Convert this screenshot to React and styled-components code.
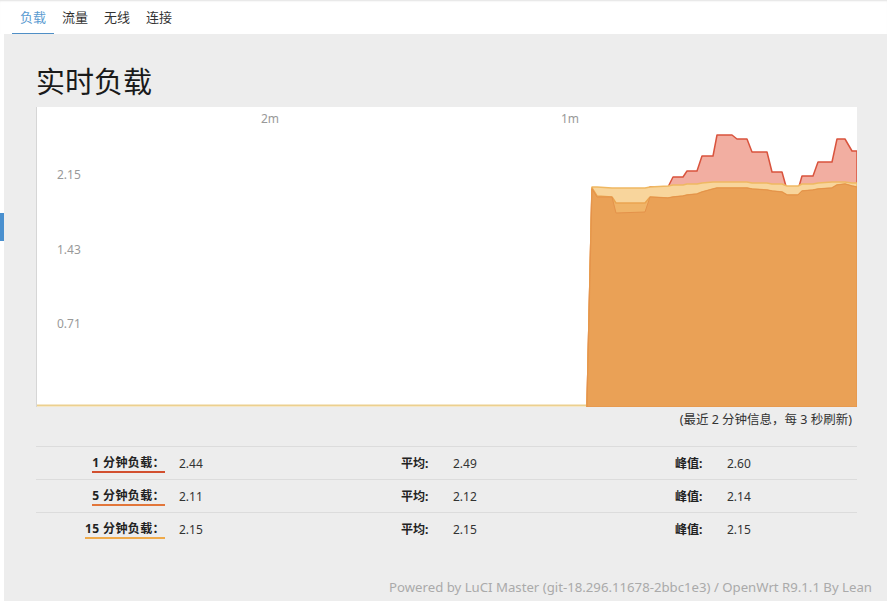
import React from 'react';
import styled, { createGlobalStyle } from 'styled-components';

const GlobalStyle = createGlobalStyle`
  html, body {
    margin: 0;
    padding: 0;
    background: #fff;
    font-family: "Noto Sans", "Noto Sans CJK SC", sans-serif;
    color: #333;
  }
`;

const tabs = ['负载', '流量', '无线', '连接'];

// x samples shared by every series (page coords)
const xs = [587, 592, 597, 612, 616, 645, 650, 668, 673, 683, 687, 697, 702, 713, 717, 732, 737, 747, 752, 767, 772, 782, 787, 798, 802, 813, 818, 832, 837, 845, 852, 857];
const load01 = [407, 189, 197, 197, 213, 212, 187, 187, 177, 177, 171, 171, 156, 156, 135, 135, 139, 139, 152, 152, 172, 172, 190, 190, 176, 176, 162, 162, 139, 139, 151, 151];
const load15 = [407, 187, 187, 188, 188, 188, 187, 186, 185, 185, 184, 184, 183, 182, 182, 182, 182, 182, 183, 183, 184, 184, 186, 186, 184, 184, 183, 182, 182, 182, 183, 183];
const load05 = [407, 188, 196, 197, 203, 203, 197, 198, 197, 196, 195, 194, 192, 189, 188, 188, 188, 188, 189, 190, 191, 192, 195, 195, 191, 190, 189, 188, 185, 184, 186, 187];
const lowest = xs.map((_, i) => Math.max(load01[i], load05[i], load15[i]));

const toPoly = (ys) => xs.map((x, i) => `${x},${ys[i]}`).join(' ') + ' 857,407';

const rows = [
  { label: '1 分钟负载：', color: '#d2502f', cur: '2.44', avg: '2.49', peak: '2.60' },
  { label: '5 分钟负载：', color: '#e2763a', cur: '2.11', avg: '2.12', peak: '2.14' },
  { label: '15 分钟负载：', color: '#efaa4a', cur: '2.15', avg: '2.15', peak: '2.15' },
];

const App = () => {
  return (
    <>
      <GlobalStyle />
      <Nav>
        {tabs.map((t, i) => (
          <Tab key={t} active={i === 0}>{t}</Tab>
        ))}
      </Nav>
      <Body>
        <Rail>
          <Handle />
        </Rail>
        <Main>
          <Title>实时负载</Title>
          <ChartBox>
            <svg width="820" height="300" viewBox="37 107 820 300">
              <text x="270" y="123" fontSize="12" fill="#999" textAnchor="middle">2m</text>
              <text x="570" y="123" fontSize="12" fill="#999" textAnchor="middle">1m</text>
              <text x="57" y="179" fontSize="12" fill="#999">2.15</text>
              <text x="57" y="254" fontSize="12" fill="#999">1.43</text>
              <text x="57" y="328" fontSize="12" fill="#999">0.71</text>
              <line x1="37" y1="405.5" x2="588" y2="405.5" stroke="#ecd08f" strokeWidth="2" />
              <polygon points={toPoly(load01)} fill="#f2aea1" stroke="#d9533d" strokeWidth="1.5" strokeLinejoin="round" />
              <polygon points={toPoly(load15)} fill="#f8d59c" stroke="#efb862" strokeWidth="1.5" strokeLinejoin="round" />
              <polygon points={toPoly(load05)} fill="#f0b468" stroke="#eaa450" strokeWidth="1.5" strokeLinejoin="round" />
              <polygon points={toPoly(lowest)} fill="#eaa156" stroke="#e4924a" strokeWidth="1" strokeLinejoin="round" />
            </svg>
          </ChartBox>
          <Note>(最近 2 分钟信息，每 3 秒刷新)</Note>
          <Table>
            {rows.map((r) => (
              <Row key={r.label}>
                <LabelCell>
                  <Label color={r.color}>{r.label}</Label>
                </LabelCell>
                <Cell>{r.cur}</Cell>
                <Cell><strong>平均:</strong></Cell>
                <Cell>{r.avg}</Cell>
                <Cell><strong>峰值:</strong></Cell>
                <Cell>{r.peak}</Cell>
              </Row>
            ))}
          </Table>
          <Footer>Powered by LuCI Master (git-18.296.11678-2bbc1e3) / OpenWrt R9.1.1 By Lean</Footer>
        </Main>
      </Body>
    </>
  );
};

const Nav = styled.div`
  display: flex;
  height: 34px;
  padding-left: 12px;
  background: #fff;
  box-shadow: inset 0 2px 2px -1px #e2e2e2;
`;

const Tab = styled.div`
  padding: 0 8px;
  font-size: 13px;
  line-height: 34px;
  color: ${(p) => (p.active ? '#5b9bd1' : '#333')};
  box-shadow: ${(p) => (p.active ? 'inset 0 -3px 0 #4f8fc6' : 'none')};
  margin-bottom: -2px;
`;

const Body = styled.div`
  display: flex;
  min-height: 567px;
`;

const Rail = styled.div`
  width: 4px;
  background: #fff;
`;

const Handle = styled.div`
  width: 4px;
  height: 28px;
  margin-top: 179px;
  background: #4a90cf;
`;

const Main = styled.div`
  flex: 1;
  background: #ededed;
  padding: 31px 30px 0 32px;
  display: flex;
  flex-direction: column;
`;

const Title = styled.h2`
  margin: 0 0 8px 0;
  font-size: 29px;
  font-weight: normal;
  line-height: 34px;
  color: #1a1a1a;
`;

const ChartBox = styled.div`
  width: 820px;
  height: 300px;
  background: #fff;
  border-left: 1px solid #d6d6d6;
  svg {
    display: block;
    font-family: "Noto Sans", sans-serif;
  }
`;

const Note = styled.div`
  text-align: right;
  font-size: 12.5px;
  line-height: 18px;
  margin-top: 4px;
  padding-right: 5px;
  color: #333;
`;

const Table = styled.div`
  margin-top: 17px;
  width: 821px;
`;

const Row = styled.div`
  display: grid;
  grid-template-columns: 135px 222px 52px 222px 52px 138px;
  height: 33px;
  align-items: center;
  border-top: 1px solid #dcdcdc;
  box-sizing: border-box;
  font-size: 12px;
  color: #333;
  strong {
    color: #222;
  }
`;

const Cell = styled.div`
  padding-left: 8px;
  white-space: nowrap;
`;

const LabelCell = styled.div`
  text-align: right;
  padding-right: 6px;
`;

const Label = styled.strong`
  display: inline-block;
  line-height: 16px;
  letter-spacing: 0.4px;
  border-bottom: 2px solid ${(p) => p.color};
  color: #222;
`;

const Footer = styled.div`
  margin-top: auto;
  padding: 0 0 5px;
  margin-right: -15px;
  text-align: right;
  font-size: 13.2px;
  line-height: 18px;
  color: #aaa;
`;

export default App;
